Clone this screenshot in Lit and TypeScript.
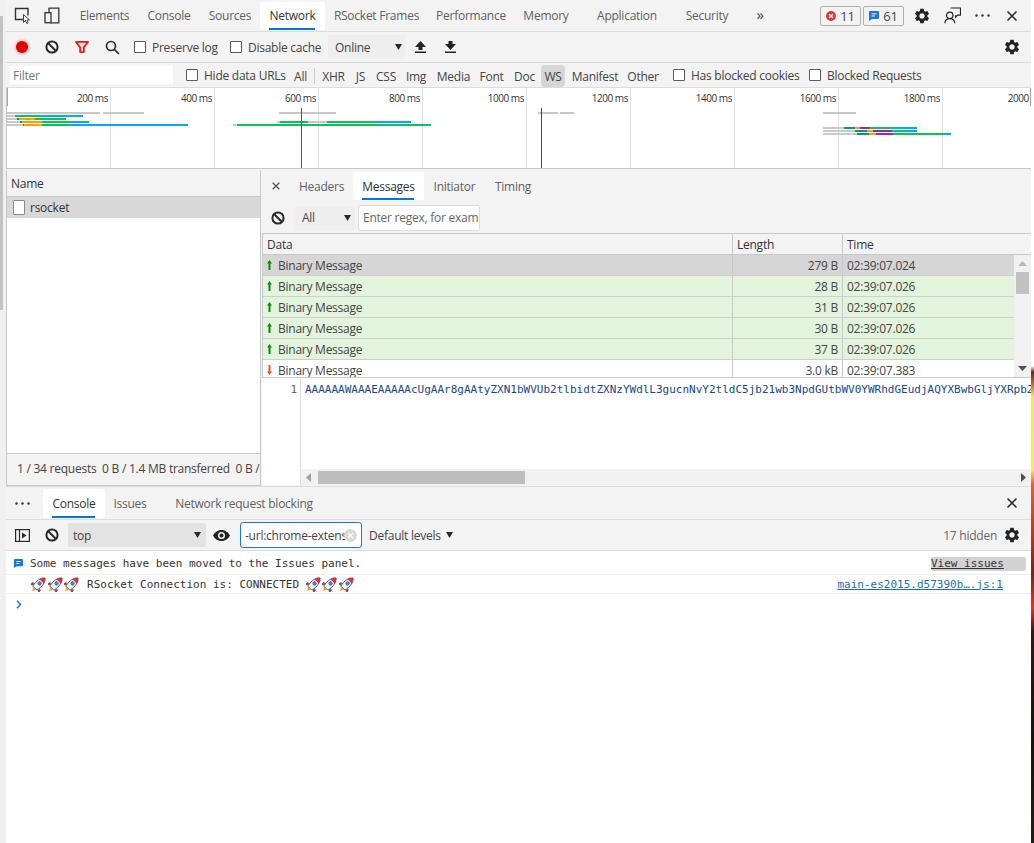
import { LitElement, css, html, svg } from 'lit';
import { customElement } from 'lit/decorators.js';

const GEAR =
  'M19.14 12.94c.04-.3.06-.61.06-.94 0-.32-.02-.64-.07-.94l2.03-1.58c.18-.14.23-.41.12-.61l-1.92-3.32c-.12-.22-.37-.29-.59-.22l-2.39.96c-.5-.38-1.03-.7-1.62-.94l-.36-2.54c-.04-.24-.24-.41-.48-.41h-3.84c-.24 0-.43.17-.47.41l-.36 2.54c-.59.24-1.13.57-1.62.94l-2.39-.96c-.22-.08-.47 0-.59.22L2.74 8.87c-.12.21-.08.47.12.61l2.03 1.58c-.05.3-.09.63-.09.94s.02.64.07.94l-2.03 1.58c-.18.14-.23.41-.12.61l1.92 3.32c.12.22.37.29.59.22l2.39-.96c.5.38 1.03.7 1.62.94l.36 2.54c.05.24.24.41.48.41h3.84c.24 0 .44-.17.47-.41l.36-2.54c.59-.24 1.13-.56 1.62-.94l2.39.96c.22.08.47 0 .59-.22l1.92-3.32c.12-.22.07-.47-.12-.61l-2.01-1.58zM12 15.6c-1.98 0-3.6-1.62-3.6-3.6s1.62-3.6 3.6-3.6 3.6 1.62 3.6 3.6-1.62 3.6-3.6 3.6z';

const gear = () => html`<span class="icon"><svg width="18" height="18" viewBox="0 0 24 24"><path d=${GEAR} fill="#222" /></svg></span>`;

const clearIcon = () => html`<span class="icon"><svg width="14" height="14" viewBox="0 0 14 14" fill="none" stroke="#2a2a2a" stroke-width="2"><circle cx="7" cy="7" r="5.6" /><path d="M3 3l8 8" /></svg></span>`;

const closeIcon = () => html`<span class="icon"><svg width="12" height="12" viewBox="0 0 12 12" stroke="#2a2a2a" stroke-width="1.6"><path d="M1.5 1.5l9 9M10.5 1.5l-9 9" /></svg></span>`;

const dotsIcon = () => html`<span class="icon"><svg width="15" height="3" viewBox="0 0 15 3" fill="#333"><circle cx="1.500" cy="1.500" r="1.200" /><circle cx="7.500" cy="1.500" r="1.200" /><circle cx="13.500" cy="1.500" r="1.200" /></svg></span>`;

const inspectIcon = () => html`<span class="icon"><svg width="17" height="17" viewBox="0 0 17 17" fill="none"><path d="M9 12.5H1.5V1.5h12.5v7" stroke="#333" stroke-width="1.4" /><path d="M9.5 7.5v8l2-2 1.3 3 1.3-.6-1.3-2.9h2.7z" fill="#fff" stroke="#444" stroke-width="1" /></svg></span>`;

const deviceIcon = () => html`<span class="icon"><svg width="16" height="17" viewBox="0 0 16 17" fill="none" stroke="#333" stroke-width="1.3"><path d="M5 5V1.2h9.8v14.6H6" /><rect x="1" y="5.7" width="6" height="10" /></svg></span>`;

const rocket = () => html`<svg class="rocket" width="15" height="15" viewBox="1.500 1.500 13 13"><g transform="rotate(45 8 8)"><path d="M5 11l-2.5 3 1-4zM11 11l2.5 3-1-4z" fill="#d8323c" stroke="#5a2a2a" stroke-width=".5" /><path d="M6.5 13l1.5 3 1.5-3z" fill="#f59a23" /><path d="M8 0c3 2.5 3.6 6.5 2.6 12.5h-5.2C4.4 6.500 5 2.500 8 0z" fill="#eef2f5" stroke="#46505a" stroke-width=".8" /><path d="M8 0c1.400 1.100 2.300 2.500 2.800 4.200H5.200C5.700 2.500 6.600 1.100 8 0z" fill="#de2f3a" /><circle cx="8" cy="6.700" r="1.500" fill="#3f8fd8" stroke="#35506a" stroke-width=".5" /></g></svg>`;

const sortArrow = (color: string, down = false) => html`<svg class="dir" width="5" height="10" viewBox="0 0 5 10"><path d=${down ? 'M1.500 0h2v6.500H5L2.500 10 0 6.500h1.500z' : 'M2.500 0L5 3.500H3.500V10h-2V3.500H0z'} fill=${color} /></svg>`;

const caret = () => html`<svg class="caret" width="7" height="6" viewBox="0 0 7 6"><path d="M0 0h7L3.500 6z" fill="#2a2a2a" /></svg>`;

type Bar = [number, number, string];

const C = { grey: '#c8c8c8', green: '#0ac45a', blue: '#03a9f4', orange: '#ff9d0a', teal: '#009688', purple: '#9c27b0' };

// x1, x2, colour for each of the waterfall rows, by y
const WATERFALL: [number, Bar[]][] = [
  [112, [[7, 100, C.grey], [103, 144, C.grey], [279, 336, C.grey], [538, 558, C.grey], [560, 574, C.grey], [823, 856, C.grey]]],
  [115, [[7, 15, C.grey], [15, 41, C.green], [41, 83, C.blue]]],
  [118, [[7, 17, C.grey], [17, 19, C.teal], [19, 35, C.orange], [35, 66, C.green]]],
  [121, [[7, 20, C.grey], [20, 22, C.teal], [22, 42, C.orange], [42, 71, C.green], [71, 89, C.blue], [277, 280, C.grey], [280, 307, C.green], [307, 308, C.blue], [308, 327, C.grey], [327, 376, C.green], [376, 411, C.blue]]],
  [124, [[7, 23, C.grey], [23, 24, C.teal], [24, 42, C.orange], [42, 70, C.green], [70, 188, C.blue], [233, 237, C.grey], [237, 430, C.green], [430, 431, C.blue]]],
  [127, [[823, 844, C.grey], [844, 855, C.teal], [855, 860, C.orange], [860, 870, C.purple], [870, 891, C.green], [891, 917, C.blue]]],
  [130, [[823, 855, C.grey], [855, 867, C.teal], [867, 873, C.orange], [873, 892, C.purple], [892, 907, C.green], [907, 917, C.blue]]],
  [133, [[823, 857, C.grey], [857, 869, C.teal], [869, 876, C.orange], [876, 893, C.purple], [893, 943, C.green], [943, 951, C.blue]]],
];

const TICKS = [200, 400, 600, 800, 1000, 1200, 1400, 1600, 1800, 2000];

const FILTERS: [string, number][] = [
  ['All', 21], ['|', 7], ['XHR', 31], ['JS', 23], ['CSS', 28], ['Img', 32], ['Media', 43], ['Font', 33], ['Doc', 33], ['WS', 24], ['Manifest', 60], ['Other', 36],
];

const MESSAGES = [
  { dir: 'up', len: '279 B', time: '02:39:07.024', cls: 'selected' },
  { dir: 'up', len: '28 B', time: '02:39:07.026', cls: 'sent' },
  { dir: 'up', len: '31 B', time: '02:39:07.026', cls: 'sent' },
  { dir: 'up', len: '30 B', time: '02:39:07.026', cls: 'sent' },
  { dir: 'up', len: '37 B', time: '02:39:07.026', cls: 'sent' },
  { dir: 'down', len: '3.0 kB', time: '02:39:07.383', cls: '' },
];

const PAYLOAD = 'AAAAAAWAAAEAAAAAcUgAAr8gAAtyZXN1bWVUb2tlbidtZXNzYWdlL3gucnNvY2tldC5jb21wb3NpdGUtbWV0YWRhdGEudjAQYXBwbGljYXRpb24vanNvbgAAAA';

const tab = (label: string, w: number, active = false) =>
  html`<div class="tab ${active ? 'active' : ''}" style="width:${w}px"><span>${label}</span></div>`;

const check = (label: string, w: number) =>
  html`<label class="check" style="width:${w}px"><i class="box"></i><span>${label}</span></label>`;

@customElement('app-root')
export class AppRoot extends LitElement {
  static styles = css`
    :host {
      display: flex;
      width: 1034px;
      height: 843px;
      overflow: hidden;
      background: #fff;
      color: #444;
      font-family: 'Open Sans', 'Noto Sans', sans-serif;
      font-size: 12px;
      letter-spacing: -0.25px;
    }

    .edge-left {
      width: 6px;
      flex: none;
      background: #f0f0f0;
    }

    .edge-left .thumb {
      width: 3px;
      height: 294px;
      margin-top: 16px;
      background: #c2c2c2;
    }

    .edge-right {
      width: 3px;
      flex: none;
      background: linear-gradient(
        #fff 0,
        #fff 366px,
        #5c3012 372px,
        #b8731c 384px,
        #ffe94a 397px,
        #ffea4a 470px,
        #f2601e 484px,
        #c0401a 527px,
        #7a2412 573px,
        #e8341a 607px,
        #3a1610 632px,
        #1a0f0d 740px,
        #2a1a14 843px
      );
    }

    .main {
      flex: 1;
      min-width: 0;
      display: flex;
      flex-direction: column;
    }

    .bar {
      display: flex;
      align-items: center;
      flex: none;
      background: #f3f3f3;
      white-space: nowrap;
    }

    .bar.top { height: 31px; border-bottom: 1px solid #dcdcdc; }
    .bar.net { height: 30px; border-bottom: 1px solid #dcdcdc; }
    .bar.filter { height: 24px; }
    .bar.sub-tabs { height: 32px; }
    .bar.sub-tools { height: 31px; }
    .bar.drawer-tabs { height: 32px; border-bottom: 1px solid #dcdcdc; }
    .bar.drawer-tools { height: 30px; border-bottom: 1px solid #dcdcdc; }

    .lead { width: 1px; flex: none; }
    .lead.tabs { width: 4px; }
    .spacer { flex: 1; }
    .end { width: 4px; flex: none; }

    .icon {
      width: 30px;
      height: 30px;
      flex: none;
      display: flex;
      align-items: center;
      justify-content: center;
    }

    .icon.close-tab { width: 28px; }

    .record {
      width: 12px;
      height: 12px;
      border-radius: 50%;
      background: #e00000;
      box-shadow: 0 0 3px 1px #f2a5a5;
    }

    .tab {
      height: 28px;
      flex: none;
      display: flex;
      align-items: center;
      justify-content: center;
      color: #5f5f5f;
      position: relative;
    }

    .tab.active {
      background: #fff;
      color: #333;
      border-radius: 2px;
    }

    .tab.active::after {
      content: '';
      position: absolute;
      left: 9px;
      right: 10px;
      bottom: 0;
      height: 2px;
      background: #0078d4;
    }

    .more {
      width: 20px;
      margin: -3px 0 0 12px;
      color: #444;
      font-size: 15px;
      line-height: 14px;
      text-align: center;
    }

    .badge {
      width: 41px;
      height: 20px;
      flex: none;
      box-sizing: border-box;
      display: flex;
      align-items: center;
      justify-content: center;
      gap: 4px;
      border: 1px solid #b0b0b0;
      border-radius: 2px;
      color: #444;
      font-size: 13px;
    }

    .badge + .badge { margin-left: 2px; }
    .badge-gap { width: 3px; flex: none; }

    .check {
      display: flex;
      flex: none;
      align-items: center;
      gap: 6px;
      box-sizing: border-box;
    }

    .box {
      width: 12px;
      height: 12px;
      flex: none;
      box-sizing: border-box;
      border: 1px solid #5a5a5a;
      background: #fff;
      border-radius: 1px;
    }

    .net .check:first-of-type { margin-left: 7px; }

    .select {
      height: 24px;
      flex: none;
      box-sizing: border-box;
      display: flex;
      align-items: center;
      justify-content: space-between;
      padding: 0 4px 0 7px;
      background: #eeeeee;
      border-radius: 2px;
      color: #444;
    }

    .select.online { width: 77px; padding-right: 3px; }
    .select.all { width: 60px; margin-left: 2px; }
    .select.ctx { width: 138px; margin-left: 1px; padding: 0 5px; background: #e3e3e3; }

    .filter-input {
      width: 163px;
      height: 18px;
      flex: none;
      box-sizing: border-box;
      margin-left: 4px;
      padding-left: 3px;
      line-height: 20px;
      background: #fff;
      color: #777;
    }

    .filter .check:first-of-type { margin-left: 13px; }
    .filter .check.gap { margin-left: 12px; }

    .kind {
      flex: none;
      height: 22px;
      margin-top: 2px;
      display: flex;
      align-items: center;
      justify-content: center;
      border-radius: 4px;
      color: #444;
    }

    .kind.on { background: #d6d6d6; }
    .kind.sep::before { content: ''; width: 1px; height: 16px; background: #ccc; }

    .overview {
      height: 82px;
      flex: none;
      box-sizing: border-box;
      position: relative;
      overflow: hidden;
      display: flex;
      border-top: 1px solid #dcdcdc;
      border-bottom: 1px solid #c8c8c8;
      border-left: 1px solid #c8c8c8;
      background: #fff;
    }

    .tick {
      width: 104px;
      flex: none;
      box-sizing: border-box;
      padding: 3px 2px 0 0;
      text-align: right;
      border-right: 1px solid #e0e0e0;
      color: #333;
      font-size: 10px;
      line-height: 14px;
      letter-spacing: -0.45px;
      white-space: nowrap;
    }

    .overview svg {
      position: absolute;
      left: -1px;
      top: -1px;
    }

    .split {
      height: 316px;
      flex: none;
      padding-top: 1px;
      display: flex;
      background: #f3f3f3;
    }

    .list {
      width: 255px;
      flex: none;
      box-sizing: border-box;
      display: flex;
      flex-direction: column;
      border-left: 1px solid #c8c8c8;
      border-right: 1px solid #c8c8c8;
      background: #fff;
    }

    .list-head {
      height: 26px;
      flex: none;
      display: flex;
      align-items: center;
      padding-left: 4px;
      background: #f3f3f3;
      border-bottom: 1px solid #c8c8c8;
      color: #333;
    }

    .list-row {
      height: 21px;
      flex: none;
      display: flex;
      align-items: center;
      gap: 5px;
      padding-left: 6px;
      background: #d8d8d8;
      color: #333;
    }

    .file {
      width: 12px;
      height: 15px;
      box-sizing: border-box;
      border: 1px solid #8a8a8a;
      background: #fff;
      border-radius: 1px;
    }

    .list-body { flex: 1; }

    .list-foot {
      height: 33px;
      flex: none;
      box-sizing: border-box;
      display: flex;
      align-items: center;
      padding: 0 0 2px 10px;
      overflow: hidden;
      white-space: pre;
      background: #f3f3f3;
      border-top: 1px solid #c8c8c8;
      border-bottom: 1px solid #c8c8c8;
      color: #444;
    }

    .detail {
      flex: 1;
      min-width: 0;
      margin-left: 1px;
      display: flex;
      flex-direction: column;
    }

    .regex {
      width: 122px;
      height: 26px;
      flex: none;
      box-sizing: border-box;
      margin-left: 3px;
      padding: 0 4px;
      line-height: 24px;
      overflow: hidden;
      white-space: nowrap;
      background: #fff;
      border: 1px solid #dcdcdc;
      border-radius: 3px;
      color: #666;
    }

    .table {
      flex: none;
      display: flex;
      flex-direction: column;
      box-sizing: border-box;
      border-top: 1px solid #c8c8c8;
      border-bottom: 1px solid #c8c8c8;
      border-left: 1px solid #c8c8c8;
      background: #fff;
    }

    .cols {
      display: grid;
      grid-template-columns: 470px 110px 1fr;
    }

    .cols > div {
      box-sizing: border-box;
      display: flex;
      align-items: center;
      padding: 0 4px;
      border-right: 1px solid #c8c8c8;
      white-space: nowrap;
    }

    .cols > div:last-child { border-right: none; }

    .thead {
      height: 21px;
      box-sizing: border-box;
      background: #f3f3f3;
      border-bottom: 1px solid #c8c8c8;
      color: #333;
    }

    .tbody {
      height: 122px;
      display: flex;
      overflow: hidden;
    }

    .rows { flex: 1; min-width: 0; }

    .row {
      height: 21px;
      box-sizing: border-box;
      border-bottom: 1px solid #cfcfcf;
      color: #444;
    }

    .row.selected { background: #d6d6d6; }
    .row.sent { background: #e2f4dc; }
    .row .len { justify-content: flex-end; }
    .dir { margin: 0 6px 0 0; flex: none; }

    .vscroll {
      width: 17px;
      flex: none;
      display: flex;
      flex-direction: column;
      align-items: center;
      background: #f1f1f1;
    }

    .vscroll .thumb {
      width: 13px;
      height: 22px;
      background: #c1c1c1;
    }

    .vscroll .up { margin: 6px 0 6px; }
    .vscroll .down { margin-top: auto; margin-bottom: 6px; }

    .code {
      height: 107px;
      flex: none;
      display: flex;
      background: #fff;
    }

    .gutter {
      width: 39px;
      flex: none;
      box-sizing: border-box;
      padding: 5px 3px 0 0;
      text-align: right;
      border-right: 1px solid #dedede;
      font-family: 'DejaVu Sans Mono', monospace;
      font-size: 11px;
      letter-spacing: 0;
      color: #666;
    }

    .code-main {
      flex: 1;
      min-width: 0;
      display: flex;
      flex-direction: column;
    }

    .code-line {
      flex: 1;
      overflow: hidden;
      padding: 5px 0 0 4px;
      font-family: 'DejaVu Sans Mono', monospace;
      font-size: 11px;
      letter-spacing: 0;
      white-space: nowrap;
      color: #17468a;
    }

    .hscroll {
      height: 16px;
      flex: none;
      display: flex;
      align-items: center;
      padding: 0 5px;
      background: #f1f1f1;
    }

    .hscroll .thumb {
      width: 207px;
      height: 13px;
      margin-left: 7px;
      background: #bdbdbd;
    }

    .drawer {
      flex: 1;
      display: flex;
      flex-direction: column;
      border-top: 1px solid #dcdcdc;
      background: #fff;
    }

    .drawer-tabs .tab.first { margin-left: 6px; }
    .drawer-tabs .tab { height: 29px; }

    .url-input {
      width: 122px;
      height: 26px;
      flex: none;
      box-sizing: border-box;
      margin-left: 4px;
      padding: 0 4px;
      display: flex;
      align-items: center;
      overflow: hidden;
      background: #fff;
      border: 1px solid #1a73e8;
      border-radius: 3px;
      color: #444;
      white-space: nowrap;
    }

    .url-input span { width: 100px; overflow: hidden; flex: none; }

    .url-clear {
      width: 13px;
      height: 13px;
      flex: none;
      margin-left: -1px;
      border-radius: 50%;
      background: #d8d8d8;
      display: flex;
      align-items: center;
      justify-content: center;
    }

    .levels {
      margin-left: 7px;
      display: flex;
      align-items: center;
      gap: 5px;
      color: #444;
    }

    .hidden-count { color: #666; }

    .msg {
      flex: none;
      box-sizing: border-box;
      display: flex;
      align-items: center;
      border-bottom: 1px solid #ececec;
      font-family: 'DejaVu Sans Mono', monospace;
      font-size: 11px;
      letter-spacing: 0;
      color: #333;
      white-space: pre;
    }

    .msg.info { height: 24px; padding: 2px 0 0 8px; }
    .msg.log { height: 19px; padding-left: 25px; }
    .msg .text { display: flex; align-items: center; }
    .msg .info-icon { margin-right: 7px; }

    .rocket { margin-right: 1.500px; flex: none; }

    .view-issues {
      width: 95px;
      height: 14px;
      line-height: 14px;
      margin: 0 5px 0 auto;
      background: #d3d3d3;
      border-radius: 2px;
      text-decoration: underline;
    }

    .src {
      margin: 0 28px 0 auto;
      color: #1a6fb5;
      text-decoration: underline;
    }

    .prompt { display: flex; padding: 6px 0 0 10px; }
  `;

  private renderBars() {
    const rects = WATERFALL.flatMap(([y, bars]) =>
      bars.map(([a, b, c]) => svg`<rect x=${a} y=${y} width=${b - a} height="2" fill=${c} />`)
    );
    return html`<svg width="1025" height="82" viewBox="6 87 1025 82">
      ${rects}
      <rect x="301" y="108" width="1" height="60" fill="#1a5fb0" />
      <rect x="541" y="108" width="1" height="60" fill="#a82020" />
      <rect x="6" y="88" width="2" height="18" fill="#a6a6a6" />
      <rect x="1030" y="88" width="1" height="18" fill="#a6a6a6" />
    </svg>`;
  }

  private renderToolbar() {
    return html`<div class="bar top">
      <div class="lead"></div>
      ${inspectIcon()} ${deviceIcon()}
      <div class="lead tabs"></div>
      ${tab('Elements', 67)} ${tab('Console', 62)} ${tab('Sources', 60)} ${tab('Network', 65, true)}
      ${tab('RSocket Frames', 103)} ${tab('Performance', 86)} ${tab('Memory', 64)} ${tab('Application', 98)} ${tab('Security', 62)}
      <div class="more">»</div>
      <div class="spacer"></div>
      <div class="badge">
        <svg width="10" height="10" viewBox="0 0 10 10"><circle cx="5" cy="5" r="5" fill="#e03a3a" /><path d="M3.200 3.200l3.600 3.600M6.800 3.200L3.200 6.800" stroke="#fff" stroke-width="1.400" /></svg>
        <span>11</span>
      </div>
      <div class="badge">
        <svg width="10" height="10" viewBox="0 0 10 10"><path d="M1 0h8a1 1 0 011 1v6a1 1 0 01-1 1H3L0 10V1a1 1 0 011-1z" fill="#1a73e8" /><path d="M2.500 2.800h5M2.500 5h3.500" stroke="#fff" /></svg>
        <span>61</span>
      </div>
      <div class="badge-gap"></div>
      ${gear()}
      <span class="icon"><svg width="17" height="17" viewBox="0 0 17 17" fill="none" stroke="#222" stroke-width="1.200"><path d="M6.500 1h10v7.200h-3l-2 2v-2" /><circle cx="5.800" cy="8.300" r="3.200" /><path d="M.8 16.300c.3-3 2.300-4.700 5-4.700s4.700 1.700 5 4.700" /></svg></span>
      ${dotsIcon()} ${closeIcon()}
      <div class="end"></div>
    </div>`;
  }

  private renderNetworkBar() {
    return html`<div class="bar net">
      <div class="lead"></div>
      <span class="icon"><i class="record"></i></span>
      ${clearIcon()}
      <span class="icon"><svg width="14" height="12" viewBox="0 0 15 13"><path d="M1 1h13L9.500 7v5H5.500V7z" fill="#fbd9d9" stroke="#e02020" stroke-width="2" stroke-linejoin="round" /></svg></span>
      <span class="icon"><svg width="15" height="15" viewBox="0 0 15 15" fill="none" stroke="#2a2a2a" stroke-width="1.700"><circle cx="6" cy="6" r="4.500" /><path d="M9.300 9.300l4.700 4.700" /></svg></span>
      ${check('Preserve log', 96)} ${check('Disable cache', 98)}
      <div class="select online"><span>Online</span>${caret()}</div>
      <span class="icon"><svg width="11" height="12" viewBox="0 0 11 12"><path d="M5.500 0l5.500 6H7.500v3h-4V6H0zM0 10.500h11V12H0z" fill="#222" /></svg></span>
      <span class="icon"><svg width="11" height="12" viewBox="0 0 11 12"><path d="M3.500 0h4v3H11l-5.500 6L0 3h3.500zM0 10.500h11V12H0z" fill="#222" /></svg></span>
      <div class="spacer"></div>
      ${gear()}
      <div class="end"></div>
    </div>`;
  }

  private renderFilterBar() {
    return html`<div class="bar filter">
      <div class="filter-input">Filter</div>
      ${check('Hide data URLs', 104)}
      ${FILTERS.map(([label, w]) =>
        label === '|'
          ? html`<div class="kind sep" style="width:${w}px"></div>`
          : html`<div class="kind ${label === 'WS' ? 'on' : ''}" style="width:${w}px">${label}</div>`
      )}
      <div class="check gap" style="width:136px"><i class="box"></i><span>Has blocked cookies</span></div>
      ${check('Blocked Requests', 120)}
    </div>`;
  }

  private renderMessages() {
    return html`<div class="table">
      <div class="cols thead">
        <div>Data</div>
        <div>Length</div>
        <div>Time</div>
      </div>
      <div class="tbody">
        <div class="rows">
          ${MESSAGES.map(
            (m) => html`<div class="cols row ${m.cls}">
              <div>${m.dir === 'up' ? sortArrow('#0a8a0a') : sortArrow('#f0541e', true)}Binary Message</div>
              <div class="len">${m.len}</div>
              <div>${m.time}</div>
            </div>`
          )}
        </div>
        <div class="vscroll">
          <svg class="up" width="9" height="5" viewBox="0 0 9 5"><path d="M4.500 0L9 5H0z" fill="#b8b8b8" /></svg>
          <div class="thumb"></div>
          <svg class="down" width="9" height="5" viewBox="0 0 9 5"><path d="M0 0h9L4.500 5z" fill="#505050" /></svg>
        </div>
      </div>
    </div>
    <div class="code">
      <div class="gutter">1</div>
      <div class="code-main">
        <div class="code-line">${PAYLOAD}</div>
        <div class="hscroll">
          <svg width="5" height="9" viewBox="0 0 5 9"><path d="M5 0v9L0 4.500z" fill="#a0a0a0" /></svg>
          <div class="thumb"></div>
          <div class="spacer"></div>
          <svg width="5" height="9" viewBox="0 0 5 9"><path d="M0 0v9l5-4.500z" fill="#505050" /></svg>
        </div>
      </div>
    </div>`;
  }

  private renderDrawer() {
    return html`<div class="drawer">
      <div class="bar drawer-tabs">
        <div class="lead"></div>
        ${dotsIcon()}
        <div class="tab active first" style="width:62px"><span>Console</span></div>
        ${tab('Issues', 50)} ${tab('Network request blocking', 178)}
        <div class="spacer"></div>
        ${closeIcon()}
        <div class="end"></div>
      </div>
      <div class="bar drawer-tools">
        <div class="lead"></div>
        <span class="icon"><svg width="15" height="13" viewBox="0 0 15 13" fill="none" stroke="#2a2a2a" stroke-width="1.200"><rect x=".6" y=".6" width="13.800" height="11.800" /><path d="M4.500.6v11.800" /><path d="M7 3.500l4.500 3-4.500 3z" fill="#2a2a2a" stroke="none" /></svg></span>
        ${clearIcon()}
        <div class="select ctx"><span>top</span>${caret()}</div>
        <span class="icon"><svg width="17" height="11" viewBox="0 0 17 11"><path d="M8.500 0C4.500 0 1.500 2.500 0 5.500 1.500 8.500 4.500 11 8.500 11s7-2.500 8.500-5.500C15.500 2.500 12.500 0 8.500 0zm0 9a3.500 3.500 0 110-7 3.500 3.500 0 010 7z" fill="#222" /><circle cx="8.500" cy="5.500" r="2" fill="#222" /></svg></span>
        <div class="url-input">
          <span>-url:chrome-extens</span>
          <i class="url-clear"><svg width="7" height="7" viewBox="0 0 7 7" stroke="#fff" stroke-width="1.200"><path d="M1 1l5 5M6 1L1 6" /></svg></i>
        </div>
        <div class="levels">Default levels ${caret()}</div>
        <div class="spacer"></div>
        <span class="hidden-count">17 hidden</span>
        ${gear()}
        <div class="end"></div>
      </div>
      <div class="msg info">
        <svg class="info-icon" width="9" height="9" viewBox="0 0 10 10"><path d="M1 0h8a1 1 0 011 1v6a1 1 0 01-1 1H3L0 10V1a1 1 0 011-1z" fill="#1a73e8" /><path d="M2.500 2.800h5M2.500 5h3.500" stroke="#fff" /></svg>
        <span>Some messages have been moved to the Issues panel.</span>
        <span class="view-issues">View issues</span>
      </div>
      <div class="msg log">
        <span class="text">${rocket()}${rocket()}${rocket()}<span> RSocket Connection is: CONNECTED </span>${rocket()}${rocket()}${rocket()}</span>
        <span class="src">main-es2015.d57390b….js:1</span>
      </div>
      <div class="prompt">
        <svg width="6" height="9" viewBox="0 0 6 9" fill="none" stroke="#1a73e8" stroke-width="1.500"><path d="M1 .8l3.500 3.700L1 8.200" /></svg>
      </div>
    </div>`;
  }

  render() {
    return html`
      <div class="edge-left"><div class="thumb"></div></div>
      <div class="main">
        ${this.renderToolbar()} ${this.renderNetworkBar()} ${this.renderFilterBar()}
        <div class="overview">
          ${TICKS.map((t) => html`<div class="tick">${t} ms</div>`)} ${this.renderBars()}
        </div>
        <div class="split">
          <div class="list">
            <div class="list-head">Name</div>
            <div class="list-row"><i class="file"></i><span>rsocket</span></div>
            <div class="list-body"></div>
            <div class="list-foot">1 / 34 requests  0 B / 1.4 MB transferred  0 B / 1.4 MB resources</div>
          </div>
          <div class="detail">
            <div class="bar sub-tabs">
              <span class="icon close-tab"><svg width="8" height="8" viewBox="0 0 8 8" stroke="#555" stroke-width="1.300"><path d="M.7.700l6.600 6.600M7.300.700L.7 7.300" /></svg></span>
              ${tab('Headers', 63)} ${tab('Messages', 71, true)} ${tab('Initiator', 61)} ${tab('Timing', 56)}
            </div>
            <div class="bar sub-tools">
              <div class="lead"></div>
              ${clearIcon()}
              <div class="select all"><span>All</span>${caret()}</div>
              <div class="regex">Enter regex, for example: (web)?socket</div>
            </div>
            ${this.renderMessages()}
          </div>
        </div>
        ${this.renderDrawer()}
      </div>
      <div class="edge-right"></div>
    `;
  }
}
